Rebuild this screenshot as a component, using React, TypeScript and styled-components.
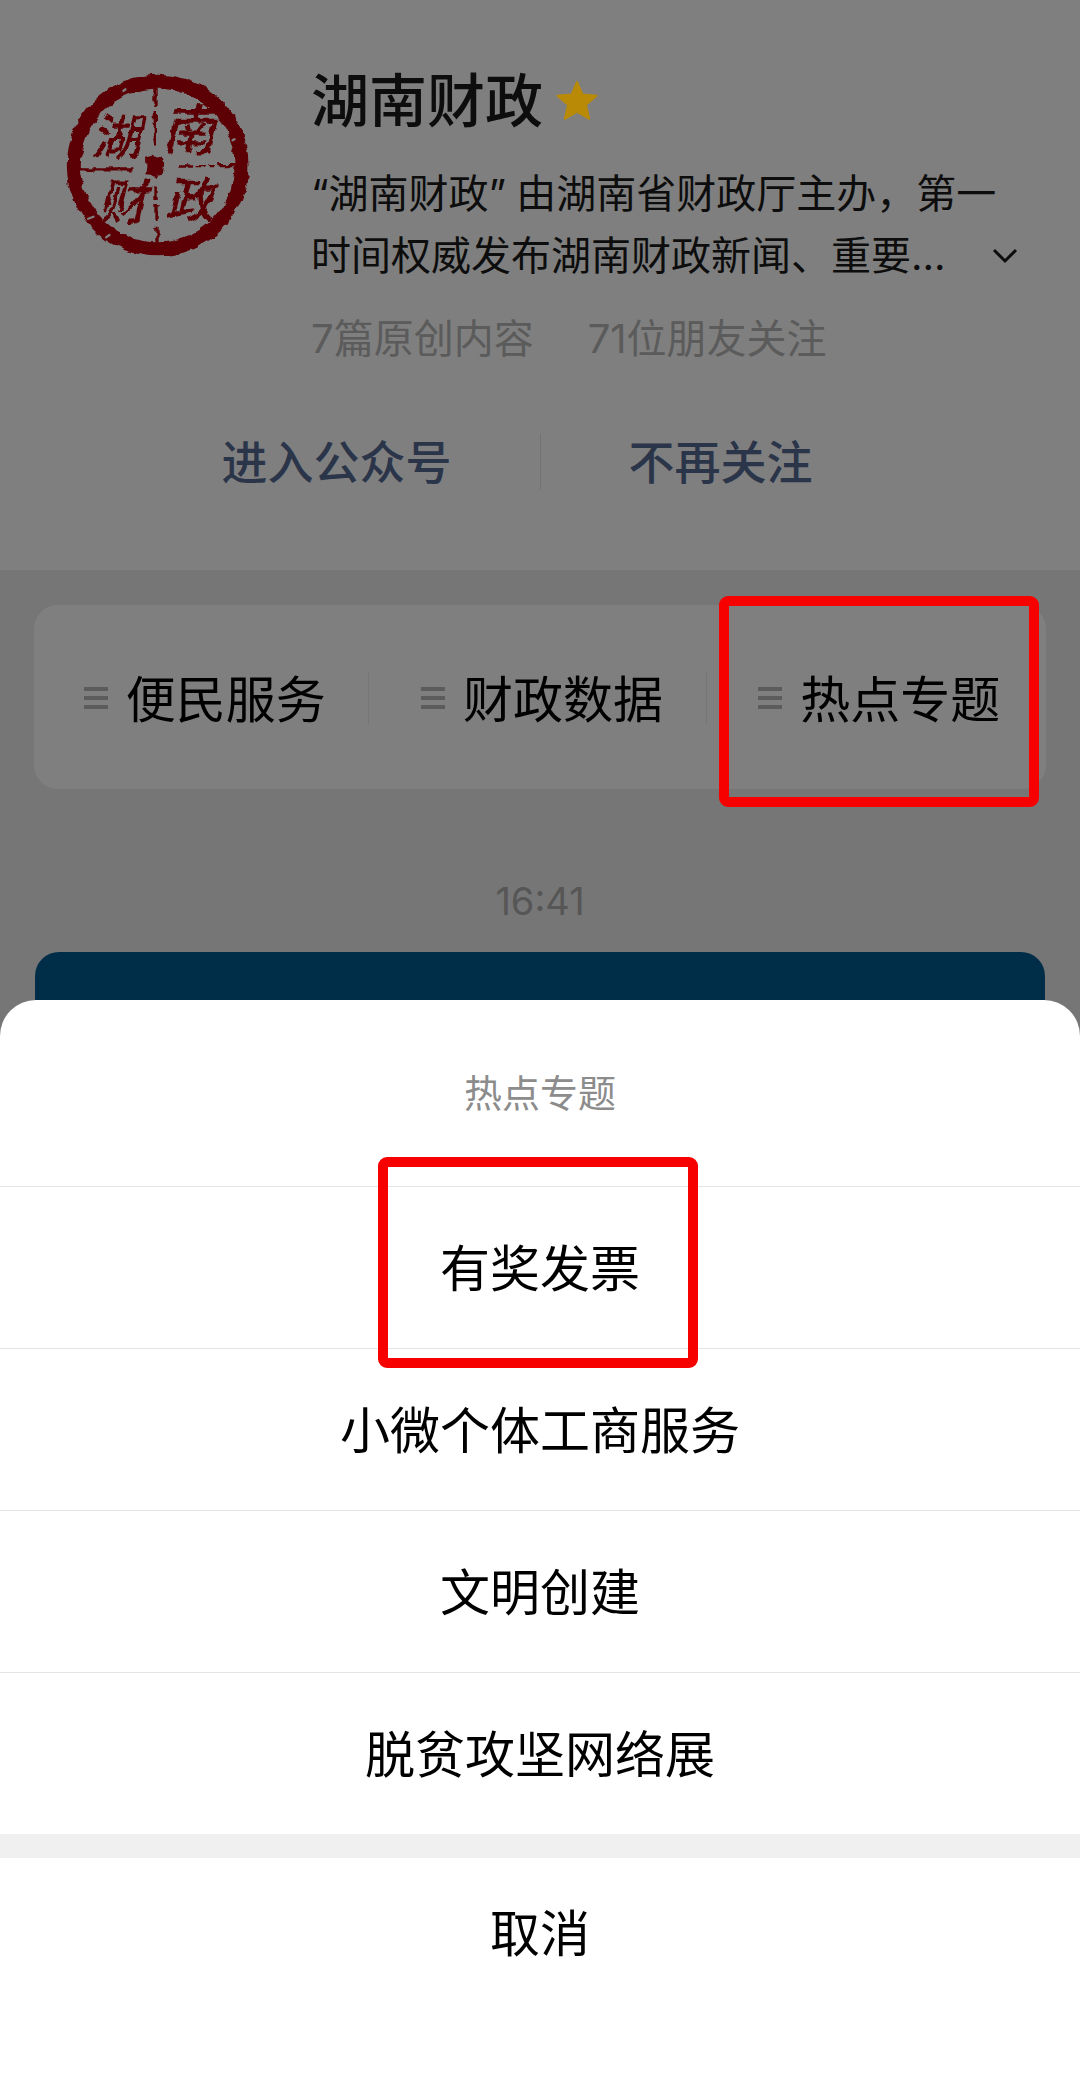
import React from "react";
import styled, { createGlobalStyle } from "styled-components";

const GlobalStyle = createGlobalStyle`
  *, *::before, *::after { box-sizing: border-box; }
  body {
    margin: 0;
    background: #ededed;
    font-family: Inter, "Noto Sans CJK SC", sans-serif;
    color: #000;
  }
  button {
    margin: 0;
    padding: 0;
    border: 0;
    background: none;
    font: inherit;
    color: inherit;
    cursor: pointer;
  }
`;

const Page = styled.main`
  min-height: 100vh;
  background: #ededed;
`;

const Header = styled.header`
  padding: 73px 60px 80px 66px;
  background: #fff;
`;

const Profile = styled.div`
  display: flex;
  align-items: flex-start;
  gap: 61px;
`;

const Seal = styled.svg`
  flex: none;
  width: 184px;
  height: 185px;
`;

const SealText = styled.text<{ $size: number }>`
  font-family: "Noto Sans CJK SC", sans-serif;
  font-size: ${(p) => p.$size}px;
  font-weight: 500;
  font-style: italic;
`;

const Info = styled.div`
  flex: 1;
  min-width: 0;
`;

const TitleRow = styled.div`
  display: flex;
  align-items: center;
  gap: 12px;
`;

const Title = styled.h1`
  margin: 0;
  font-size: 58px;
  line-height: 56px;
  font-weight: 500;
  color: #1a1a1a;
`;

const Star = styled.svg`
  position: relative;
  z-index: 3;
  width: 44px;
  height: 44px;
`;

const Description = styled.p`
  margin: 34px 0 27px;
  font-size: 40px;
  line-height: 62px;
  color: #1a1a1a;
`;

const DescriptionLine = styled.span`
  display: flex;
  align-items: center;
  justify-content: space-between;
  white-space: nowrap;
`;

const QuotedName = styled.span`
  margin-right: 10px;
`;

const ExpandButton = styled.button`
  display: flex;
`;

const Meta = styled.div`
  display: flex;
  gap: 54px;
  font-size: 40px;
  line-height: 50px;
  color: #b6b6b6;
`;

const Actions = styled.nav`
  display: grid;
  grid-template-columns: 1fr 1px 1fr;
  column-gap: 88px;
  align-items: center;
  margin: 70px 0 0;
  padding-right: 6px;
`;

const ActionLink = styled.a<{ $align: "start" | "end" }>`
  justify-self: ${(p) => p.$align};
  font-size: 46px;
  line-height: 56px;
  font-weight: 500;
  color: #576b95;
  text-decoration: none;
  white-space: nowrap;
`;

const ActionDivider = styled.span`
  height: 56px;
  background: #e6e6e6;
`;

const Chips = styled.nav`
  display: grid;
  grid-template-columns: repeat(3, 1fr);
  margin: 35px 34px 0;
  border-radius: 24px;
  background: #fff;
`;

const Chip = styled.button`
  position: relative;
  display: flex;
  align-items: center;
  justify-content: center;
  gap: 18px;
  height: 184px;
  padding: 0 0 2px 4px;
  font-size: 50px;
  white-space: nowrap;

  & + &::before {
    content: "";
    position: absolute;
    left: -3px;
    top: 66px;
    width: 1px;
    height: 54px;
    background: #ececec;
  }
`;

const MenuIcon = styled.svg`
  width: 24px;
  height: 24px;
  margin-top: 4px;
`;

const Highlight = styled.span`
  position: absolute;
  z-index: 3;
  border: 10px solid #f60000;
  border-radius: 9px;
  pointer-events: none;
`;

const ChipHighlight = styled(Highlight)`
  inset: -9px 7px -18px 10px;
`;

const ActionHighlight = styled(Highlight)`
  top: -30px;
  bottom: -20px;
  left: calc(50% - 162px);
  width: 320px;
`;

const Time = styled.time`
  display: block;
  margin: 87px 0 26px;
  text-align: center;
  font-size: 38px;
  line-height: 50px;
  color: #acacac;
`;

const Article = styled.section`
  height: 200px;
  margin: 0 35px;
  border-radius: 24px 24px 0 0;
  background: #005c90;
`;

const Scrim = styled.div`
  position: fixed;
  inset: 0;
  z-index: 2;
  display: flex;
  flex-direction: column;
  justify-content: flex-end;
  background: rgba(0, 0, 0, 0.5);
`;

const Sheet = styled.section`
  border-radius: 36px 36px 0 0;
  padding-bottom: 65px;
  background: #fff;
`;

const SheetTitle = styled.h2`
  margin: 0;
  padding: 68px 0;
  text-align: center;
  font-size: 38px;
  line-height: 50px;
  font-weight: 400;
  color: #8c8c8c;
`;

const SheetAction = styled.button`
  position: relative;
  display: block;
  width: 100%;
  height: 162px;
  padding-bottom: 6px;
  border-top: 1px solid #e4e4e4;
  font-size: 50px;
`;

const CancelAction = styled.button`
  display: block;
  width: 100%;
  height: 174px;
  padding-bottom: 6px;
  border-top: 24px solid #f0f0f0;
  font-size: 50px;
`;

const chips = ["便民服务", "财政数据", "热点专题"];
const actions = ["有奖发票", "小微个体工商服务", "文明创建", "脱贫攻坚网络展"];

function SealLogo() {
  return (
    <Seal viewBox="48 38 552 556" role="img" aria-label="湖南财政">
      <defs>
        <filter id="rough" x="-5%" y="-5%" width="110%" height="110%">
          <feTurbulence type="fractalNoise" baseFrequency="0.035" numOctaves="2" seed="7" />
          <feDisplacementMap
            in="SourceGraphic"
            scale="20"
            xChannelSelector="R"
            yChannelSelector="G"
          />
        </filter>
      </defs>
      <g fill="#b8000a" stroke="none" filter="url(#rough)">
        <circle cx="323" cy="316" r="252" fill="none" stroke="#b8000a" strokeWidth="42" />
        <path d="M288 290 l20 -6 8 8 22 -3 5 20 -4 28 -17 3 -6 12 -14 -8 -16 -2 3 -22z" />
        <g fill="none" stroke="#b8000a" strokeWidth="10">
          <path d="M315 78V140M316 152V256" />
          <path d="M318 382V420M318 432V480M321 500V556" />
          <path d="M88 326H250" />
          <path d="M385 319H430M440 318H465M475 318H495M505 315H560" strokeWidth="7" />
        </g>
        <SealText $size={148} x="124" y="284">湖</SealText>
        <SealText $size={164} x="334" y="268">南</SealText>
        <SealText $size={148} x="142" y="480">财</SealText>
        <SealText $size={148} x="346" y="474">政</SealText>
      </g>
      <g stroke="#fff" strokeWidth="7" fill="none" strokeLinecap="round">
        <path d="M220 92l6 -5M114 476l16 -6M168 532l10 -7M548 240l6 -3" />
      </g>
    </Seal>
  );
}

export default function App() {
  return (
    <>
      <GlobalStyle />
      <Page lang="zh-CN">
        <Header>
          <Profile>
            <SealLogo />
            <Info>
              <TitleRow>
                <Title>湖南财政</Title>
                <Star viewBox="0 0 44 44" aria-hidden="true">
                  <path
                    d="M22 3 27.4 15.6 41.5 16.8 30.8 26 34.2 39.8 22 32.6 9.8 39.8 13.2 26 2.5 16.8 16.6 15.6Z"
                    fill="#b98a06"
                    stroke="#b98a06"
                    strokeWidth="2"
                    strokeLinejoin="round"
                  />
                </Star>
              </TitleRow>
              <Description>
                <DescriptionLine>
                  <span>
                    <QuotedName>“湖南财政”</QuotedName>由湖南省财政厅主办，第一
                  </span>
                </DescriptionLine>
                <DescriptionLine>
                  时间权威发布湖南财政新闻、重要...
                  <ExpandButton aria-label="展开">
                    <svg width="30" height="20" viewBox="0 0 30 20" fill="none">
                      <path d="M4 4 15 15 26 4" stroke="#1a1a1a" strokeWidth="3" />
                    </svg>
                  </ExpandButton>
                </DescriptionLine>
              </Description>
              <Meta>
                <span>7篇原创内容</span>
                <span>71位朋友关注</span>
              </Meta>
            </Info>
          </Profile>
          <Actions>
            <ActionLink href="#account" $align="end">进入公众号</ActionLink>
            <ActionDivider />
            <ActionLink href="#unfollow" $align="start">不再关注</ActionLink>
          </Actions>
        </Header>
        <Chips>
          {chips.map((label) => (
            <Chip key={label}>
              <MenuIcon viewBox="0 0 24 24" aria-hidden="true">
                <path d="M0 3H24M0 12H24M0 21H24" stroke="#b8b8b8" strokeWidth="4" />
              </MenuIcon>
              {label}
              {label === "热点专题" && <ChipHighlight />}
            </Chip>
          ))}
        </Chips>
        <Time>16:41</Time>
        <Article />
      </Page>
      <Scrim>
        <Sheet role="dialog" aria-label="热点专题" lang="zh-CN">
          <SheetTitle>热点专题</SheetTitle>
          {actions.map((label) => (
            <SheetAction key={label}>
              {label}
              {label === "有奖发票" && <ActionHighlight />}
            </SheetAction>
          ))}
          <CancelAction>取消</CancelAction>
        </Sheet>
      </Scrim>
    </>
  );
}
